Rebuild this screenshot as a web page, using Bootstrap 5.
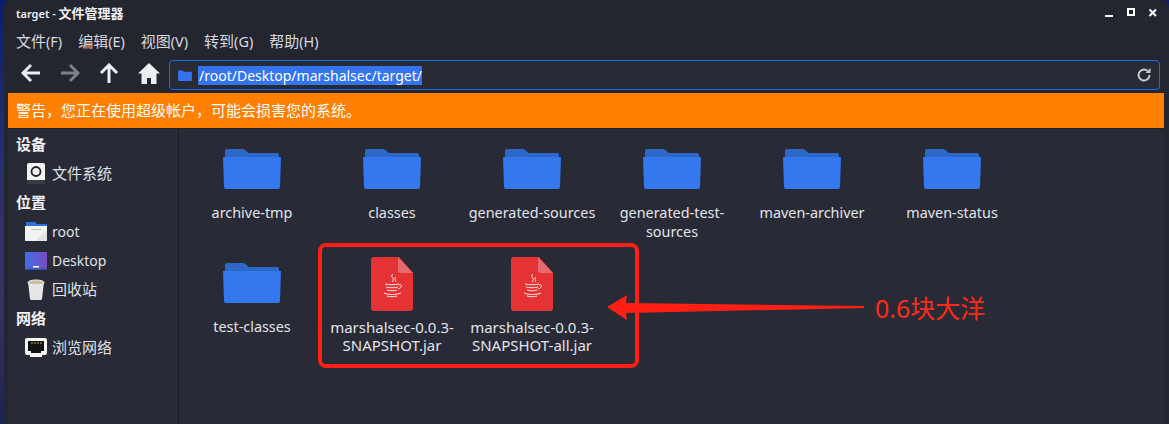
<!DOCTYPE html>
<html lang="zh-CN">
<head>
<meta charset="utf-8">
<title>target - 文件管理器</title>
<link rel="stylesheet" href="https://cdn.jsdelivr.net/npm/bootstrap@5.3.0/dist/css/bootstrap.min.css">
<style>
html,body{margin:0;height:424px;overflow:hidden;background:#10205c}
body{font-family:"Noto Sans","Noto Sans CJK SC",sans-serif;font-size:14px;color:#e6e8ee}
.zh{font-size:15px}
.desk{height:424px;padding-left:4px;background:linear-gradient(180deg,#0a1f6b 0,#2a2f6e 40%,#3a3264 70%,#1a2352 100%)}
.fm-win{height:424px;background:#23262f;border-top-left-radius:6px;border-top-right-radius:8px;overflow:hidden;position:relative}
.fm-title{height:26px;padding:3px 0 0 12px;font-size:11px;font-weight:600;color:#f1f2f5;line-height:20px}
.fm-title .zh{font-size:13px}
.wm-btn{position:absolute;top:7px;right:0;height:12px;gap:10px;padding-right:10px}
.fm-menu{height:28px;padding:3px 0 0 12px;gap:16px;line-height:24px;color:#d8dae0;font-size:14.400px}
.fm-tools{height:39px;padding:6px 0 0 12px}
.tool-ic{width:39px;height:26px;flex:none;padding-left:5px}
.tool-end{width:36px}
.fm-path{width:991px;height:30px;border:1px solid #1c6ee8;border-radius:4px;background:#282a36;padding-left:8px;position:relative}
.fm-sel{background:#3574f0;color:#fff;line-height:19px;margin-left:6px;padding:0 0 0 1px}
.fm-reload{margin-right:7px}
.fm-warn{height:35px;margin-left:4px;margin-right:5px;background:#ff7f00;color:#fff;padding-left:8px;line-height:35px}
.fm-body{height:296px;margin-left:4px;margin-right:5px;background:#282a36;border-top:1px solid #1e2028}
.fm-side{width:171px;flex:none;border-right:1px solid #1a1c24;padding:1px 0 0 8px}
.side-h{height:29px;font-weight:700;line-height:29px;color:#f2f3f6}
.side-i{height:29px;gap:5px;line-height:29px;padding-left:9px;color:#dfe2e8}
.side-i svg{flex:none}
.fm-grid{width:843px;flex:none;padding:19px 0 0 3px;align-content:flex-start}
.fm-item{width:140px;height:114px;text-align:center;color:#e2e5ea;line-height:19px;font-size:14.400px}
.fm-item svg{display:block;margin:0 auto 14px}
.fm-item.jar-item{font-size:15px;line-height:18px}
.fm-item svg.jar-ic{margin:-5px auto 7px}
.red-box{position:absolute;left:314px;top:243px;width:321px;height:125px;border:4px solid #ff1f14;border-radius:8px}
.red-arrow{position:absolute;left:603px;top:292px}
.red-label{position:absolute;left:871px;top:292px;color:#ff2a1a;font-size:25px;line-height:32px}
</style>
</head>
<body>
<div class="desk">
<div class="fm-win">
  <div class="fm-title">target - <span class="zh">文件管理器</span></div>
  <div class="wm-btn d-flex align-items-center">
    <svg width="12" height="12" viewBox="0 0 12 12"><rect x="2" y="8" width="8" height="2" fill="#fff"/></svg>
    <svg width="12" height="12" viewBox="0 0 12 12"><rect x="3" y="2" width="6" height="6" fill="none" stroke="#fff" stroke-width="2"/></svg>
    <svg width="12" height="12" viewBox="0 0 12 12"><path d="M2.500 2.500l6.500 6.500M9 2.500l-6.500 6.500" stroke="#fff" stroke-width="2"/></svg>
  </div>
  <div class="fm-menu d-flex"><span><span class="zh">文件</span>(F)</span><span><span class="zh">编辑</span>(E)</span><span><span class="zh">视图</span>(V)</span><span><span class="zh">转到</span>(G)</span><span><span class="zh">帮助</span>(H)</span></div>
  <div class="fm-tools d-flex">
    <div class="tool-ic d-flex align-items-center"><svg width="20" height="20" viewBox="0 0 20 20" fill="none" stroke="#eceef2" stroke-width="3"><path d="M19 10H3M10 2l-8 8 8 8"/></svg></div>
    <div class="tool-ic d-flex align-items-center"><svg width="20" height="20" viewBox="0 0 20 20" fill="none" stroke="#7d8087" stroke-width="3"><path d="M1 10h16M10 2l8 8-8 8"/></svg></div>
    <div class="tool-ic d-flex align-items-center"><svg width="20" height="20" viewBox="0 0 20 20" fill="none" stroke="#eceef2" stroke-width="3"><path d="M10 20V3M2 10l8-8 8 8"/></svg></div>
    <div class="tool-ic tool-end d-flex align-items-center"><svg width="22" height="21" viewBox="0 0 22 21" fill="#eceef2"><path d="M11 0L0 10.500h3.500V21h5.500v-6h4v6h5.500V10.500H22z"/></svg></div>
    <div class="fm-path d-flex align-items-center">
      <svg width="14" height="11" viewBox="0 0 15 12" fill="#3574f0"><path d="M0 1.500A1 1 0 0 1 1 .5h4l1.500 1.500H14a1 1 0 0 1 1 1V11a1 1 0 0 1-1 1H1a1 1 0 0 1-1-1z"/></svg>
      <span class="fm-sel">/root/Desktop/marshalsec/target/</span>
      <svg class="ms-auto fm-reload" width="16" height="16" viewBox="0 0 16 16" fill="none" stroke="#c9cbd0" stroke-width="2"><path d="M13.500 8A5.500 5.500 0 1 1 11.500 3.800"/><path d="M14.500 1v5h-5z" fill="#c9cbd0" stroke="none"/></svg>
    </div>
  </div>
  <div class="fm-warn zh">警告，您正在使用超级帐户，可能会损害您的系统。</div>
  <div class="fm-body d-flex">
    <div class="fm-side">
      <div class="side-h zh">设备</div>
      <div class="side-i d-flex">
        <svg class="align-self-center" width="22" height="22" viewBox="0 0 22 22"><rect x="2" y="0" width="18" height="21" rx="2" fill="#f4f4f4"/><rect x="2" y="17" width="18" height="4" fill="#3a3c44"/><circle cx="11" cy="8.500" r="4.500" fill="none" stroke="#222" stroke-width="1.800"/></svg>
        <span class="zh">文件系统</span>
      </div>
      <div class="side-h zh">位置</div>
      <div class="side-i d-flex">
        <svg class="align-self-center" width="22" height="20" viewBox="0 0 22 20"><path d="M1 0h9l2 2h10v4H1z" fill="#2f6fe0"/><rect y="4" width="22" height="15" fill="#f3f3f3"/><rect x="6" y="7" width="10" height="1" fill="#bbb"/><path d="M22 8v11H10z" fill="#e2e2e2"/></svg>
        <span>root</span>
      </div>
      <div class="side-i d-flex">
        <svg class="align-self-center" width="22" height="18" viewBox="0 0 22 18"><defs><linearGradient id="dk" x1="0" y1="0" x2="1" y2="0"><stop offset="0" stop-color="#3f6fe6"/><stop offset="1" stop-color="#7a4bc0"/></linearGradient></defs><rect width="22" height="18" fill="url(#dk)"/><rect y="16.500" width="22" height="1.500" fill="#2f55b0"/><rect x="8" y="14" width="6" height="1.500" fill="#fff"/></svg>
        <span>Desktop</span>
      </div>
      <div class="side-i d-flex">
        <svg class="align-self-center" width="22" height="22" viewBox="0 0 22 22"><path d="M3 3h16l-2 17a1.500 1.500 0 0 1-1.500 1h-9A1.500 1.500 0 0 1 5 20z" fill="#e6e6e6"/><ellipse cx="11" cy="3.500" rx="8" ry="2.500" fill="#c9c29a" stroke="#f4f4f4"/></svg>
        <span class="zh">回收站</span>
      </div>
      <div class="side-h zh">网络</div>
      <div class="side-i d-flex">
        <svg class="align-self-center" width="22" height="20" viewBox="0 0 22 20"><path d="M2 0h18a2 2 0 0 1 2 2v13a2 2 0 0 1-2 2h-3v2H5v-2H2a2 2 0 0 1-2-2V2a2 2 0 0 1 2-2z" fill="#f5f5f5"/><path d="M3 3h16v10h-3v2H6v-2H3z" fill="#111"/><path d="M7 4v2M10 4v2M13 4v2M16 4v2" stroke="#c9a84a"/></svg>
        <span class="zh">浏览网络</span>
      </div>
    </div>
    <div class="fm-grid d-flex flex-wrap">
      <svg width="0" height="0" class="position-absolute"><defs>
        <symbol id="fold" viewBox="0 0 58 41"><path d="M2 3a2 2 0 0 1 2-2h17l5 4h28a2 2 0 0 1 2 2v6H2z" fill="#2d67c8"/><path d="M0 9h58l-1 30a2 2 0 0 1-2 2H3a2 2 0 0 1-2-2z" fill="#3578ee"/></symbol>
        <symbol id="jar" viewBox="0 0 42 54"><path d="M3 0h25l14 16v35a3 3 0 0 1-3 3H3a3 3 0 0 1-3-3V3a3 3 0 0 1 3-3z" fill="#e53335"/><path d="M27 0l15 16H30a3 3 0 0 1-3-3z" fill="#e86a6c"/><g fill="none" stroke="#f8e6e6" stroke-width="1"><path d="M22 17c-4 3 3 4-1 8M25 20c-3 2 1 3-1 5"/><path d="M14 27c4 1 10 1 14 0M15 30c3 1 9 1 12 0M16 33c3 1 7 1 10 0"/><path d="M28 28c4-1 3 3-1 4"/><path d="M13 36c5 2 12 2 17 0M16 39c3 1 7 1 10 0"/></g></symbol>
      </defs></svg>
      <div class="fm-item"><svg width="58" height="41"><use href="#fold"/></svg>archive-tmp</div>
      <div class="fm-item"><svg width="58" height="41"><use href="#fold"/></svg>classes</div>
      <div class="fm-item"><svg width="58" height="41"><use href="#fold"/></svg>generated-sources</div>
      <div class="fm-item"><svg width="58" height="41"><use href="#fold"/></svg>generated-test-<br>sources</div>
      <div class="fm-item"><svg width="58" height="41"><use href="#fold"/></svg>maven-archiver</div>
      <div class="fm-item"><svg width="58" height="41"><use href="#fold"/></svg>maven-status</div>
      <div class="fm-item"><svg width="58" height="41"><use href="#fold"/></svg>test-classes</div>
      <div class="fm-item jar-item"><svg class="jar-ic" width="42" height="54"><use href="#jar"/></svg>marshalsec-0.0.3-<br>SNAPSHOT.jar</div>
      <div class="fm-item jar-item"><svg class="jar-ic" width="42" height="54"><use href="#jar"/></svg>marshalsec-0.0.3-<br>SNAPSHOT-all.jar</div>
    </div>
  </div>
  <div class="red-box"></div>
  <svg class="red-arrow" width="260" height="30" viewBox="0 0 260 30"><path d="M0 15L20 3l-1 8 238 3v2L19 21l1 7z" fill="#ff1f14"/></svg>
  <div class="red-label"><span>0.6块大洋</span></div>
</div>
</div>
</body>
</html>
